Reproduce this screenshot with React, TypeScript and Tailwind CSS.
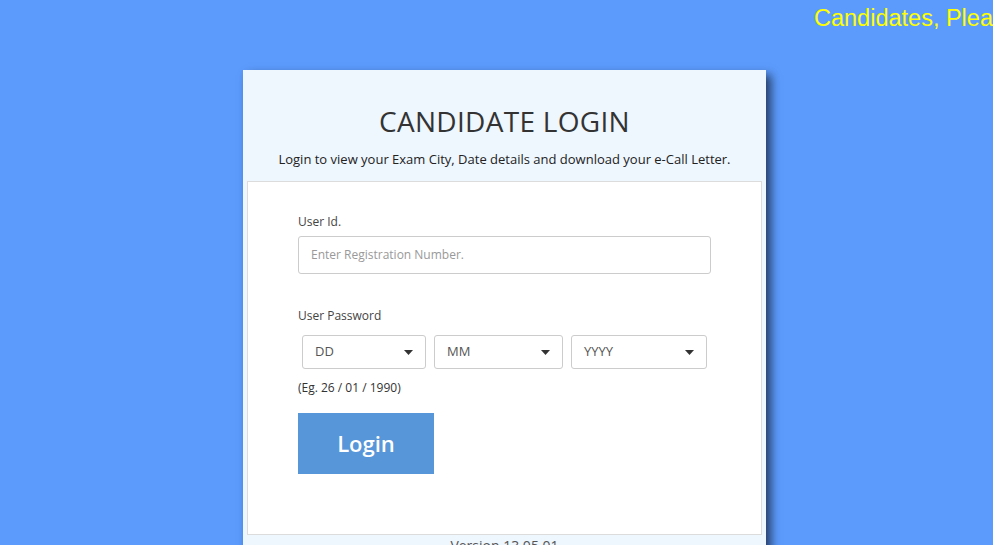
const selects = [
  { label: 'DD', width: 'w-[124px]' },
  { label: 'MM', width: 'w-[129px]' },
  { label: 'YYYY', width: 'w-[136px]' },
] as const

function Caret() {
  return (
    <svg width="9" height="5" viewBox="0 0 9 5" className="text-[#333]">
      <path d="M0 0h9L4.5 5z" fill="currentColor" />
    </svg>
  )
}

export default function App() {
  return (
    <div className="bg-white font-['Open_Sans',sans-serif]">
      <div className="relative h-[545px] overflow-hidden bg-[#5c9bfc]">
        {/* scrolling notice */}
        <div className="absolute left-[814px] top-[3px] whitespace-nowrap font-['Liberation_Sans',Arial,sans-serif] text-[23.5px] leading-[30px] text-[#ffff00]">
          Candidates, Please note
        </div>

        <div className="ml-[243px] mt-[70px] w-[523px] bg-[#eef6fe] px-[4px] shadow-[5px_5px_9px_rgba(20,30,50,0.75)]">
          <div className="pt-[32px] text-center">
            <h1 className="text-[28px] leading-[38px] tracking-[0.3px] text-[#333]">CANDIDATE LOGIN</h1>
            <p className="mt-[10px] text-[13px] leading-[18px] text-[#222]">
              Login to view your Exam City, Date details and download your e-Call Letter.
            </p>
          </div>

          <div className="mt-[13px] h-[354px] border border-[#dcdcdc] bg-white px-[50px] pt-[32px]">
            <label className="block text-[12px] leading-[16px] text-[#444]">User Id.</label>
            <div className="mt-[6px] flex h-[38px] items-center rounded-[3px] border border-[#ccc] px-[12px] text-[12px] text-[#999]">
              Enter Registration Number.
            </div>

            <label className="mt-[34px] block text-[12px] leading-[16px] text-[#444]">User Password</label>
            <div className="ml-[4px] mt-[11px] flex gap-[8px]">
              {selects.map(s => (
                <div
                  key={s.label}
                  className={`${s.width} flex h-[34px] items-center justify-between rounded-[3px] border border-[#ccc] pl-[12px] pr-[12px] text-[13px] text-[#555]`}
                >
                  <span>{s.label}</span>
                  <Caret />
                </div>
              ))}
            </div>
            <p className="mt-[11px] text-[12px] leading-[16px] text-[#333]">(Eg. 26 / 01 / 1990)</p>

            <button className="mt-[17px] flex h-[61px] w-[136px] items-center justify-center bg-[#5796d8] text-[22px] font-semibold text-white">
              Login
            </button>
          </div>

          <div className="pt-[2px] text-center text-[14px] leading-[18px] text-[#555]">Version 13.05.01</div>
        </div>
      </div>
    </div>
  )
}
